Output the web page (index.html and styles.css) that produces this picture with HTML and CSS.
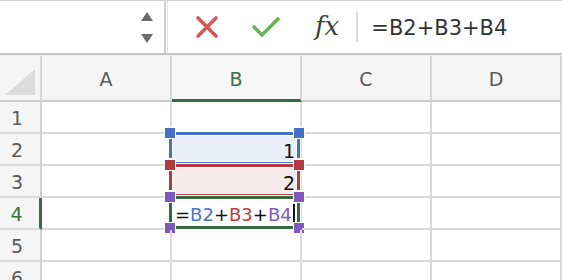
FILE: index.html
```html
<!DOCTYPE html>
<html lang="en">
<head>
    <meta charset="UTF-8">
    <title>Formula</title>
    <link rel="stylesheet" href="styles.css">
</head>
<body>
    <div class="toolbar">
        <div class="namebox">
            <div class="spin">
                <span class="arrow up"></span>
                <span class="arrow down"></span>
            </div>
        </div>
        <div class="formula-bar">
            <svg class="icon cancel" width="24" height="24" viewBox="0 0 24 24">
                <path d="M3 3 L21 21 M21 3 L3 21" stroke="#d65753" stroke-width="3.6" stroke-linecap="round" fill="none"/>
            </svg>
            <svg class="icon enter" width="30" height="22" viewBox="0 0 30 22">
                <path d="M3 11 L11 19 L27 3" stroke="#69b45a" stroke-width="3.6" stroke-linecap="round" stroke-linejoin="round" fill="none"/>
            </svg>
            <span class="fx">fx</span>
            <span class="sep"></span>
            <span class="formula-text">=B2+B3+B4</span>
        </div>
    </div>

    <div class="sheet">
        <div class="corner"></div>
        <div class="col-head">A</div>
        <div class="col-head active">B</div>
        <div class="col-head">C</div>
        <div class="col-head">D</div>

        <div class="row-head">1</div>
        <div class="cell"></div>
        <div class="cell"></div>
        <div class="cell"></div>
        <div class="cell"></div>

        <div class="row-head">2</div>
        <div class="cell"></div>
        <div class="cell num ref-blue">1
            <div class="range blue">
                <i class="h tl"></i><i class="h tr"></i><i class="h bl"></i><i class="h br"></i>
            </div>
        </div>
        <div class="cell"></div>
        <div class="cell"></div>

        <div class="row-head">3</div>
        <div class="cell"></div>
        <div class="cell num ref-red">2
            <div class="range red">
                <i class="h tl"></i><i class="h tr"></i><i class="h bl"></i><i class="h br"></i>
            </div>
        </div>
        <div class="cell"></div>
        <div class="cell"></div>

        <div class="row-head active">4</div>
        <div class="cell"></div>
        <div class="cell editing">
            <span>=</span><span class="c-blue">B2</span><span>+</span><span class="c-red">B3</span><span>+</span><span class="c-purple">B4</span><span class="caret"></span>
            <div class="range current">
                <i class="h tl"></i><i class="h tr"></i><i class="h bl"></i><i class="h br"></i>
            </div>
        </div>
        <div class="cell"></div>
        <div class="cell"></div>

        <div class="row-head">5</div>
        <div class="cell"></div>
        <div class="cell"></div>
        <div class="cell"></div>
        <div class="cell"></div>

        <div class="row-head">6</div>
        <div class="cell"></div>
        <div class="cell"></div>
        <div class="cell"></div>
        <div class="cell"></div>
    </div>
</body>
</html>
```

FILE: styles.css
```css
* {
    box-sizing: border-box;
}
body {
    margin: 0;
    width: 562px;
    height: 280px;
    overflow: hidden;
    background: #fff;
    font-family: 'DejaVu Sans', sans-serif;
}
.toolbar {
    display: flex;
    height: 55px;
    border-top: 1px solid #d2d2d2;
    border-bottom: 2px solid #c4c4c4;
}
.namebox {
    width: 166px;
    border-right: 2px solid #cdcdcd;
    display: flex;
    justify-content: flex-end;
    align-items: center;
    padding-right: 11px;
}
.spin {
    display: flex;
    flex-direction: column;
    gap: 13px;
}
.arrow {
    width: 0;
    height: 0;
    border-left: 6px solid transparent;
    border-right: 6px solid transparent;
}
.arrow.up {
    border-bottom: 9px solid #6b6b6b;
}
.arrow.down {
    border-top: 9px solid #6b6b6b;
}
.formula-bar {
    flex: 1;
    display: flex;
    align-items: center;
    margin-left: 1px;
    border-left: 1px solid #e2e2e2;
    padding-left: 27px;
}
.icon.enter {
    margin-left: 32px;
}
.fx {
    margin-left: 34px;
    font-family: 'DejaVu Serif', serif;
    font-style: italic;
    font-size: 26px;
    color: #3f3f3f;
    margin-top: -2px;
}
.sep {
    width: 2px;
    height: 30px;
    background: #dadada;
    margin-left: 17px;
}
.formula-text {
    margin-left: 13px;
    font-size: 21px;
    color: #333;
    margin-top: 2px;
}
.sheet {
    display: grid;
    grid-template-columns: 42px 130px 130px 130px 130px;
    grid-template-rows: 46px repeat(6, 32px);
    border-top: 1px solid #ececec;
}
.corner,
.col-head,
.row-head {
    background: #f5f5f5;
    color: #5a5a5a;
    font-size: 19px;
    display: flex;
    align-items: center;
    justify-content: center;
}
.corner,
.col-head {
    border-right: 2px solid #d6d6d6;
    border-bottom: 2px solid #cbcbcb;
}
.corner {
    position: relative;
}
.corner::after {
    content: "";
    position: absolute;
    right: 5px;
    bottom: 5px;
    border-left: 30px solid transparent;
    border-bottom: 26px solid #dcdcdc;
}
.col-head {
    padding-top: 2px;
}
.col-head.active {
    color: #3a7046;
    background: #f7f7f7;
    border-bottom: 3px solid #3a6b44;
}
.row-head {
    border-right: 2px solid #d0d0d0;
    border-bottom: 2px solid #dadada;
    padding-right: 6px;
    padding-top: 2px;
}
.row-head.active {
    color: #3a7046;
    border-right: 3px solid #3a6b44;
}
.cell {
    position: relative;
    border-right: 2px solid #dadada;
    border-bottom: 2px solid #dadada;
    font-size: 18px;
    color: #111;
    display: flex;
    align-items: center;
}
.cell.num {
    justify-content: flex-end;
    padding-right: 5px;
    padding-top: 3px;
    font-size: 19px;
}
.ref-blue {
    background: #e9eef8;
}
.ref-red {
    background: #f6ebea;
}
.cell.editing {
    padding-left: 3px;
    padding-top: 2px;
    color: #111;
}
.c-blue { color: #4a73c6; }
.c-red { color: #b5403f; }
.c-purple { color: #7e5cc0; }
.caret {
    width: 2px;
    height: 25px;
    background: #111;
    margin-left: 1px;
    margin-top: 4px;
}
.range {
    position: absolute;
    left: -3px;
    top: -2px;
    right: 0;
    bottom: -1px;
    border: 3px solid;
    box-shadow: inset 0 0 0 1px #fff, 0 0 0 1px #fff;
}
.range.blue { border-color: #4470c6; }
.range.red { border-color: #b03b3d; }
.range.current { border-color: #386a42; }
.h {
    position: absolute;
    width: 12px;
    height: 12px;
    border: 1px solid #fff;
}
.blue .h { background: #4470c6; }
.red .h { background: #b03b3d; }
.current .h { background: #7d59bf; }
.h.tl { left: -8px; top: -8px; }
.h.tr { right: -8px; top: -8px; }
.h.bl { left: -8px; bottom: -8px; }
.h.br { right: -8px; bottom: -8px; }
```
